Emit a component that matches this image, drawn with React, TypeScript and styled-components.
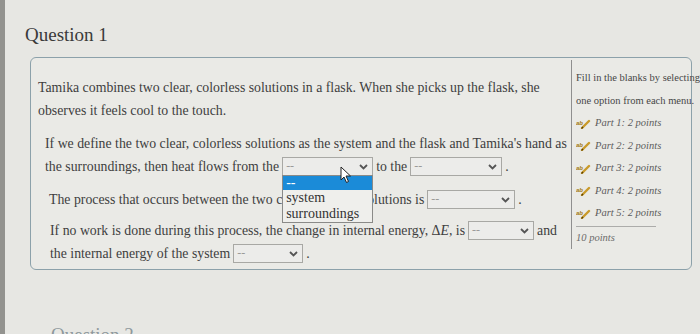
import React from "react";
import styled, { createGlobalStyle } from "styled-components";

const GlobalStyle = createGlobalStyle`
  html, body { margin: 0; padding: 0; }
  body {
    background: #e7e7e3;
    font-family: "Liberation Serif", "DejaVu Serif", serif;
    color: #3e3e3e;
    width: 700px;
    height: 334px;
    overflow: hidden;
  }
`;

const Page = styled.div`
  position: relative;
  box-sizing: border-box;
  width: 700px;
  height: 334px;
  overflow: hidden;
  border-left: 5px solid #93938f;
  padding: 23px 0 0 20px;
  display: flex;
  flex-direction: column;
`;

const Title = styled.h2<{ $faint?: boolean }>`
  margin: 0;
  font-size: 19px;
  line-height: 24px;
  font-weight: normal;
  color: ${(p) => (p.$faint ? "#8d989c" : "#3a3a3a")};
  margin-left: ${(p) => (p.$faint ? "26px" : "0")};
  margin-top: ${(p) => (p.$faint ? "53px" : "0")};
`;

const Card = styled.div`
  margin: 10px 0 0 5px;
  width: 662px;
  height: 216px;
  box-sizing: border-box;
  border: 1.5px solid #8ca1aa;
  border-radius: 6px;
  background: #eaeae6;
  display: grid;
  grid-template-columns: 540px 1fr;
`;

const Main = styled.div`
  padding: 18px 0 0 7px;
  font-size: 13.8px;
  line-height: 23px;
  white-space: nowrap;
`;

const Para = styled.p<{ $indent: number; $gap: number }>`
  margin: ${(p) => p.$gap}px 0 0 ${(p) => p.$indent}px;
`;

const SelectBox = styled.span<{ $w: number }>`
  position: relative;
  display: inline-flex;
  align-items: center;
  justify-content: space-between;
  vertical-align: middle;
  box-sizing: border-box;
  width: ${(p) => p.$w}px;
  height: 19px;
  margin: -2px 3px 0 3px;
  padding: 0 4px 0 3px;
  border: 1px solid #a8a8a4;
  background: #ececea;
  font-size: 12px;
  line-height: 17px;
  color: #9a9a9a;
`;

const DropList = styled.span`
  position: absolute;
  z-index: 5;
  top: 17px;
  left: -1px;
  right: -1px;
  display: flex;
  flex-direction: column;
  border: 1px solid #8a8a88;
  background: #efefec;
`;

const Option = styled.span<{ $active?: boolean }>`
  display: block;
  height: ${(p) => (p.$active ? "14px" : "16px")};
  line-height: ${(p) => (p.$active ? "14px" : "16px")};
  padding: 0 3px;
  font-size: 14px;
  color: ${(p) => (p.$active ? "#ffffff" : "#333")};
  background: ${(p) => (p.$active ? "#1b8bd8" : "transparent")};
`;

const Cursor = styled.svg`
  position: absolute;
  z-index: 6;
  left: 57px;
  top: 8px;
`;

const Side = styled.div`
  margin: 2px 0 20px 0;
  border-left: 1px solid #8f8f8f;
  padding: 7px 0 0 4px;
  font-size: 10.5px;
  line-height: 22.5px;
  color: #474747;
  white-space: nowrap;
  display: flex;
  flex-direction: column;
`;

const PartRow = styled.div`
  display: flex;
  align-items: center;
  gap: 4px;
  font-style: italic;
  color: #5c5c5c;
  font-size: 10.5px;
`;

const Divider = styled.div`
  width: 80px;
  border-top: 1px solid #acacaa;
  margin-top: 1px;
`;

const Total = styled.div`
  font-style: italic;
  color: #6a6a6a;
  font-size: 10.5px;
`;

const Chevron = () => (
  <svg width="9" height="6" viewBox="0 0 9 6">
    <path d="M1 1 L4.5 4.5 L8 1" fill="none" stroke="#555" strokeWidth="1.8" />
  </svg>
);

const Select = ({ w, open }: { w: number; open?: boolean }) => (
  <SelectBox $w={w}>
    <span>--</span>
    <Chevron />
    {open && (
      <>
        <DropList>
          <Option $active>--</Option>
          <Option>system</Option>
          <Option>surroundings</Option>
        </DropList>
        <Cursor width="12" height="18" viewBox="0 0 12 18">
          <path
            d="M1 1 L1 14 L4 11 L6.5 16.5 L8.5 15.5 L6 10 L10.5 10 Z"
            fill="#ffffff"
            stroke="#222"
            strokeWidth="1"
            strokeLinejoin="round"
          />
        </Cursor>
      </>
    )}
  </SelectBox>
);

const PartIcon = () => (
  <svg width="15" height="11" viewBox="0 0 15 11">
    <text x="0" y="7" fontSize="6" fontFamily="Liberation Sans, sans-serif" fontWeight="bold" fill="#a27a14">
      ab
    </text>
    <path d="M6 10 L13 3" stroke="#c99a2a" strokeWidth="2.4" strokeLinecap="round" />
    <path d="M5.5 10.5 L7 9" stroke="#5a4208" strokeWidth="1.2" />
  </svg>
);

const parts = [1, 2, 3, 4, 5];

export default function App() {
  return (
    <>
      <GlobalStyle />
      <Page>
        <Title>Question 1</Title>
        <Card>
          <Main>
            <Para $indent={0} $gap={0}>
              Tamika combines two clear, colorless solutions in a flask. When she picks up the flask, she
              <br />
              observes it feels cool to the touch.
            </Para>
            <Para $indent={7} $gap={10}>
              If we define the two clear, colorless solutions as the system and the flask and Tamika's hand as
              <br />
              the surroundings, then heat flows from the
              <Select w={91} open />
              to the
              <Select w={92} />.
            </Para>
            <Para $indent={11} $gap={10}>
              The process that occurs between the two clear, colorless solutions is
              <Select w={88} />.
            </Para>
            <Para $indent={12} $gap={8}>
              If no work is done during this process, the change in internal energy, Δ<i>E</i>, is
              <Select w={66} />
              and
              <br />
              the internal energy of the system
              <Select w={70} />.
            </Para>
          </Main>
          <Side>
            <div>Fill in the blanks by selecting</div>
            <div>one option from each menu.</div>
            {parts.map((n) => (
              <PartRow key={n}>
                <PartIcon />
                <span>Part {n}: 2 points</span>
              </PartRow>
            ))}
            <Divider />
            <Total>10 points</Total>
          </Side>
        </Card>
        <Title $faint>Question 2</Title>
      </Page>
    </>
  );
}
